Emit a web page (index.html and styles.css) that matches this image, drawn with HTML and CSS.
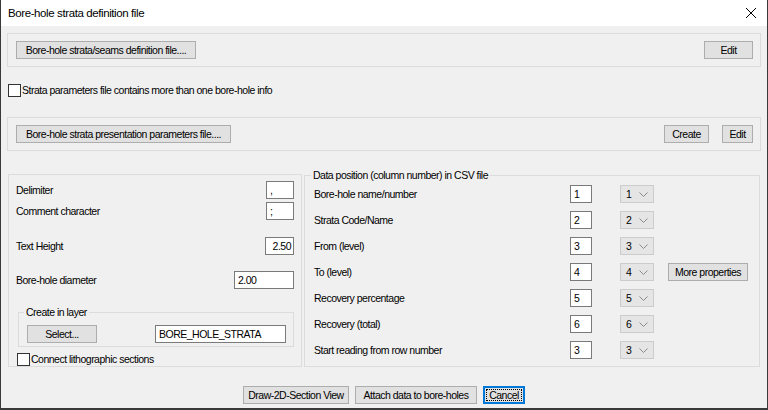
FILE: index.html
```html
<!DOCTYPE html>
<html>
<head>
<meta charset="utf-8">
<link rel="stylesheet" href="styles.css">
</head>
<body>
<div class="window">
  <div class="titlebar">
    <span class="title">Bore-hole strata definition file</span>
    <svg class="close" width="12" height="12" viewBox="0 0 12 12"><path d="M1 1 L11 11 M11 1 L1 11" stroke="#000" stroke-width="1" fill="none"/></svg>
  </div>
  <div class="content">
    <div class="group bar g1">
      <button class="btn btn-def">Bore-hole strata/seams definition file....</button>
      <div class="spacer"></div>
      <button class="btn btn-edit">Edit</button>
    </div>
    <label class="check check-top"><span class="box"></span>Strata parameters file contains more than one bore-hole info</label>
    <div class="group bar g2">
      <button class="btn btn-pres">Bore-hole strata presentation parameters file....</button>
      <div class="spacer"></div>
      <button class="btn btn-create">Create</button>
      <button class="btn btn-edit">Edit</button>
    </div>
    <div class="lower">
      <div class="group left">
        <div class="frow r1"><span>Delimiter</span><span class="input w28">,</span></div>
        <div class="frow r2"><span>Comment character</span><span class="input w28">;</span></div>
        <div class="frow r3"><span>Text Height</span><span class="input w29 ralign">2.50</span></div>
        <div class="frow r4"><span>Bore-hole diameter</span><span class="input w60">2.00</span></div>
        <div class="group layer">
          <span class="legend">Create in layer</span>
          <button class="btn btn-select">Select...</button>
          <span class="input w131">BORE_HOLE_STRATA</span>
        </div>
        <label class="check check-lith"><span class="box"></span>Connect lithographic sections</label>
      </div>
      <div class="group right">
        <span class="legend">Data position (column number) in CSV file</span>
        <div class="grid">
          <span class="lbl">Bore-hole name/number</span><span class="input small">1</span><span class="combo">1<svg width="9" height="5" viewBox="0 0 9 5"><path d="M0.5 0.5 L4.5 4.5 L8.5 0.5" stroke="#8a8a8a" fill="none"/></svg></span><span></span>
          <span class="lbl">Strata Code/Name</span><span class="input small">2</span><span class="combo">2<svg width="9" height="5" viewBox="0 0 9 5"><path d="M0.5 0.5 L4.5 4.5 L8.5 0.5" stroke="#8a8a8a" fill="none"/></svg></span><span></span>
          <span class="lbl">From (level)</span><span class="input small">3</span><span class="combo">3<svg width="9" height="5" viewBox="0 0 9 5"><path d="M0.5 0.5 L4.5 4.5 L8.5 0.5" stroke="#8a8a8a" fill="none"/></svg></span><span></span>
          <span class="lbl">To (level)</span><span class="input small">4</span><span class="combo">4<svg width="9" height="5" viewBox="0 0 9 5"><path d="M0.5 0.5 L4.5 4.5 L8.5 0.5" stroke="#8a8a8a" fill="none"/></svg></span><button class="btn btn-more">More properties</button>
          <span class="lbl">Recovery percentage</span><span class="input small">5</span><span class="combo">5<svg width="9" height="5" viewBox="0 0 9 5"><path d="M0.5 0.5 L4.5 4.5 L8.5 0.5" stroke="#8a8a8a" fill="none"/></svg></span><span></span>
          <span class="lbl">Recovery (total)</span><span class="input small">6</span><span class="combo">6<svg width="9" height="5" viewBox="0 0 9 5"><path d="M0.5 0.5 L4.5 4.5 L8.5 0.5" stroke="#8a8a8a" fill="none"/></svg></span><span></span>
          <span class="lbl">Start reading from row number</span><span class="input small">3</span><span class="combo">3<svg width="9" height="5" viewBox="0 0 9 5"><path d="M0.5 0.5 L4.5 4.5 L8.5 0.5" stroke="#8a8a8a" fill="none"/></svg></span><span></span>
        </div>
      </div>
    </div>
    <div class="footer">
      <button class="btn btn-draw">Draw-2D-Section View</button>
      <button class="btn btn-attach">Attach data to bore-holes</button>
      <button class="btn btn-cancel"><span class="focus">Cancel</span></button>
    </div>
  </div>
</div>
</body>
</html>
```
FILE: styles.css
```css
* { box-sizing: border-box; }
html, body { margin: 0; padding: 0; }
body {
  width: 768px;
  height: 410px;
  background: #3a3a3a;
  font-family: "Liberation Sans", Arial, sans-serif;
  font-size: 10.5px;
  letter-spacing: -0.5px;
  color: #000;
  overflow: hidden;
  white-space: nowrap;
}
.window {
  margin-left: 1px;
  width: 766px;
  height: 408px;
  background: #f0f0f0;
  display: flex;
  flex-direction: column;
}
.titlebar {
  height: 26px;
  background: #fff;
  display: flex;
  align-items: center;
  padding: 0 10px 0 7px;
  font-size: 11.5px;
  letter-spacing: -0.4px;
}
.title { flex: 1; }
.close { display: block; }
.content {
  flex: 1;
  padding: 7px 6px 0 6px;
  display: flex;
  flex-direction: column;
}
.group {
  border: 1px solid #dcdcdc;
  position: relative;
}
.legend {
  position: absolute;
  top: -8px;
  left: 6px;
  padding: 0 2px;
  background: #f0f0f0;
  line-height: 14px;
}
.bar {
  height: 34px;
  display: flex;
  align-items: center;
  padding: 0 7px 0 8px;
}
.spacer { flex: 1; }
.btn {
  font-family: inherit;
  font-size: inherit;
  letter-spacing: inherit;
  color: #000;
  background: #e1e1e1;
  border: 1px solid #adadad;
  height: 18px;
  padding: 0;
  margin: 0;
  line-height: 16px;
  white-space: nowrap;
}
.btn-def { width: 180px; }
.btn-pres { width: 215px; }
.btn-edit { width: 49px; }
.g2 .btn-edit { width: 31px; margin-left: 13px; }
.btn-create { width: 45px; }
.check {
  display: flex;
  align-items: center;
  height: 14px;
}
.box {
  width: 13px;
  height: 13px;
  border: 1px solid #333;
  background: #fff;
  margin-right: 1px;
}
.check-top { margin: 16px 0 0 1px; }
.g2 { margin-top: 20px; }
.lower {
  display: flex;
  margin-top: 23px;
  height: 193px;
}
.left {
  width: 294px;
  margin-left: 1px;
  padding: 6px 7px 0 7px;
  display: flex;
  flex-direction: column;
}
.right {
  width: 456px;
  margin-left: 2px;
  margin-top: 1px;
  padding: 9px 0 0 9px;
}
.frow {
  display: flex;
  align-items: center;
  justify-content: space-between;
  height: 18px;
}
.r2 { margin-top: 3px; }
.r3 { margin-top: 17px; }
.r4 { margin-top: 16px; }
.input {
  display: inline-block;
  height: 18px;
  border: 1px solid #7a7a7a;
  background: #fff;
  line-height: 16px;
  padding: 0 3px;
}
.w28 { width: 28px; }
.w29 { width: 29px; }
.w60 { width: 60px; }
.w131 { width: 131px; }
.input.ralign { text-align: right; padding-right: 2px; }
.layer {
  margin-top: 23px;
  height: 35px;
  margin-left: 2px;
  display: flex;
  align-items: center;
  padding: 8px 0 0 8px;
}
.layer .legend { left: 5px; }
.btn-select { width: 70px; }
.layer .input { margin-left: 58px; }
.check-lith { margin-top: 5px; margin-left: 1px; }
.grid {
  display: grid;
  grid-template-columns: 256px 50px 48px 80px;
  grid-auto-rows: 18px;
  row-gap: 8px;
  align-items: center;
}
.grid .input.small { width: 22px; padding: 0 3px; }
.combo {
  width: 34px;
  height: 18px;
  border: 1px solid #cccccc;
  background: #e5e5e5;
  display: flex;
  align-items: center;
  justify-content: space-between;
  padding: 0 5px 0 5px;
  line-height: 16px;
}
.combo svg { display: block; }
.btn-more { width: 80px; }
.footer {
  display: flex;
  margin-top: 19px;
  padding-left: 236px;
  gap: 6px;
}
.btn-draw { width: 106px; }
.btn-attach { width: 122px; }
.btn-cancel {
  width: 42px;
  border: 1px solid #0078d7;
  box-shadow: inset 0 0 0 1px #0078d7;
  padding: 2px;
  line-height: 12px;
}
.focus {
  display: block;
  border: 1px dotted #000;
  height: 12px;
  line-height: 11px;
}
```
